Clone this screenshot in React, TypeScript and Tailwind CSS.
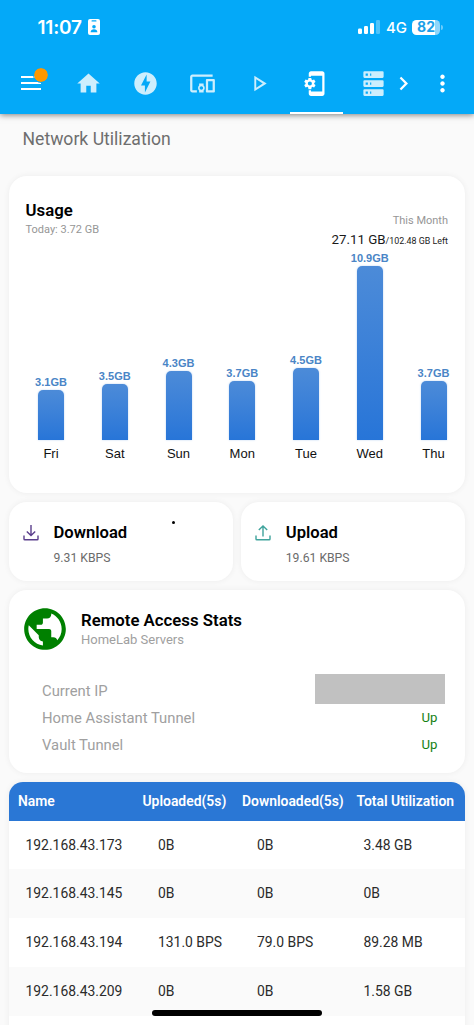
// App.tsx - Network dashboard
import {
  MdChevronRight,
  MdDevicesOther,
  MdHome,
  MdMoreVert,
  MdOfflineBolt,
  MdPhonelinkSetup,
  MdPublic,
} from 'react-icons/md';

const usage = [
  { day: 'Fri', label: '3.1GB', height: 50 },
  { day: 'Sat', label: '3.5GB', height: 56 },
  { day: 'Sun', label: '4.3GB', height: 69 },
  { day: 'Mon', label: '3.7GB', height: 59 },
  { day: 'Tue', label: '4.5GB', height: 72 },
  { day: 'Wed', label: '10.9GB', height: 174 },
  { day: 'Thu', label: '3.7GB', height: 59.5 },
];

const clients = [
  { name: '192.168.43.173', up: '0B', down: '0B', total: '3.48 GB' },
  { name: '192.168.43.145', up: '0B', down: '0B', total: '0B' },
  { name: '192.168.43.194', up: '131.0 BPS', down: '79.0 BPS', total: '89.28 MB' },
  { name: '192.168.43.209', up: '0B', down: '0B', total: '1.58 GB' },
];

function StatusBar() {
  return (
    <div className="flex items-center h-[54px] pl-[37.5px] pr-[31px] font-['Inter'] text-white">
      <span className="text-[19px] leading-none font-semibold tracking-[-0.2px]">11:07</span>
      <svg className="ml-[6px] w-[12px] h-[16px]" viewBox="0 0 12 16">
        <rect width="12" height="16" rx="2" fill="#fff" />
        <rect x="3.5" y="1.3" width="5" height="1.2" rx="0.6" fill="#04a9f8" />
        <circle cx="6" cy="7.8" r="1.8" fill="#04a9f8" />
        <path d="M2.6 13.3c0-2 1.5-3 3.4-3s3.4 1 3.4 3z" fill="#04a9f8" />
      </svg>
      <svg className="ml-auto w-[22px] h-[14px]" viewBox="0 0 22 14" fill="#fff">
        <rect x="0" y="8.5" width="4" height="5.5" rx="1.2" />
        <rect x="6" y="6" width="4" height="8" rx="1.2" />
        <rect x="12" y="3" width="4" height="11" rx="1.2" />
        <rect x="18" y="0" width="4" height="14" rx="1.2" opacity="0.3" />
      </svg>
      <span className="ml-[6px] w-[21px] text-[15px] leading-none font-medium">4G</span>
      <div className="ml-[5px] flex items-center">
        <div className="w-[28px] h-[15px] rounded-[4.5px] bg-linear-to-r from-white from-82% to-[#8fd6fb] to-82% flex items-center justify-center text-[14px] leading-none font-bold text-[#1ba0e8]">
          82
        </div>
        <div className="ml-px w-[2px] h-[5px] rounded-r-full bg-[#6ccbfb]" />
      </div>
    </div>
  );
}

function TopNav() {
  return (
    <nav className="flex items-center h-[60px] pb-[2px] text-[#cdeefd]">
      <div className="relative ml-[21px] w-[20px] h-[14px] text-white">
        <svg className="w-[20px] h-[14px]" viewBox="0 0 20 14" fill="currentColor">
          <path d="M0 0h20v2H0zM0 6h20v2H0zM0 12h20v2H0z" />
        </svg>
        <span className="absolute left-[12.5px] -top-[8px] w-[14px] h-[14px] rounded-full bg-[#ff9800] outline-1 outline-[#04a9f8]" />
      </div>
      <MdHome className="ml-[34px] w-[27px] h-[27px] shrink-0" />
      <MdOfflineBolt className="ml-[30px] w-[27px] h-[27px] shrink-0" />
      <MdDevicesOther className="ml-[30px] w-[27px] h-[27px] shrink-0" />
      <svg className="ml-[31px] w-[27px] h-[27px] shrink-0" viewBox="0 0 24 24" fill="currentColor">
        <path d="M8.2 8.3 14 12l-5.8 3.7V8.3M6.5 5.200v13.600L17.500 12" />
      </svg>
      <div className="relative ml-[16px] w-[53px] h-[27px] flex justify-center pr-[3px] text-white">
        <MdPhonelinkSetup className="w-[27px] h-[27px] shrink-0" />
        <span className="absolute left-0 top-[42px] w-[53px] h-[2.5px] bg-white" />
      </div>
      <svg className="ml-[17px] w-[27px] h-[27px] shrink-0" viewBox="0 0 24 24" fill="currentColor">
        <path d="M4 1h16a1 1 0 0 1 1 1v4a1 1 0 0 1-1 1H4a1 1 0 0 1-1-1V2a1 1 0 0 1 1-1m0 8h16a1 1 0 0 1 1 1v4a1 1 0 0 1-1 1H4a1 1 0 0 1-1-1v-4a1 1 0 0 1 1-1m0 8h16a1 1 0 0 1 1 1v4a1 1 0 0 1-1 1H4a1 1 0 0 1-1-1v-4a1 1 0 0 1 1-1M9 5h1V3H9v2m0 8h1v-2H9v2m0 8h1v-2H9v2M5 3v2h2V3H5m0 8v2h2v-2H5m0 8v2h2v-2H5z" />
      </svg>
      <MdChevronRight className="ml-[2.5px] w-[27px] h-[27px] shrink-0 text-white" />
      <MdMoreVert className="ml-[12.5px] w-[27px] h-[27px] shrink-0 text-white" />
    </nav>
  );
}

function UsageCard() {
  return (
    <section className="h-[317.5px] rounded-[18px] bg-white shadow-[0_0_6px_rgba(0,0,0,0.06)] flex flex-col">
      <div className="h-[76px] flex justify-between pl-[16.5px] pr-[17px] whitespace-nowrap">
        <div className="pt-[24.5px]">
          <h2 className="text-[16.8px] leading-[20px] font-semibold text-black">Usage</h2>
          <p className="text-[11px] leading-[20px] text-[#969696]">Today: 3.72 GB</p>
        </div>
        <div className="pt-[35.5px] text-right">
          <p className="text-[11px] leading-[20px] text-[#969696]">This Month</p>
          <p className="text-[13.3px] leading-[18px] text-[#1a1a1a]">
            27.11 GB<span className="text-[8.9px]">/102.48 GB Left</span>
          </p>
        </div>
      </div>

      {/* Daily bars */}
      <div className="h-[212.5px] flex items-end justify-between pl-[25px] pr-[14.5px] font-['Liberation_Sans']">
        {usage.map((d, i) => (
          <div key={i} className="w-[34px] flex flex-col items-center">
            <span className="text-[11px] leading-[16px] font-bold text-[#4a85c6]">{d.label}</span>
            <div
              className="w-[26px] rounded-t-[5px] bg-linear-to-b from-[#4c8bd8] to-[#2775d8] shadow-[0_0_2px_rgba(39,117,216,0.35)]"
              style={{ height: d.height }}
            />
            <span className="h-[24px] text-[13px] leading-[27px] text-[#111]">{d.day}</span>
          </div>
        ))}
      </div>
    </section>
  );
}

function SpeedCard({ title, value, color, arrow }: { title: string; value: string; color: string; arrow: string }) {
  return (
    <div className="flex-1 h-[78.5px] rounded-[18px] bg-white shadow-[0_0_6px_rgba(0,0,0,0.06)] flex pl-[14px] whitespace-nowrap">
      <svg className="mt-[23px] w-[16px] h-[16px]" viewBox="0 0 16 16" fill="none" stroke={color} strokeWidth="1.4">
        <path d={arrow} />
        <path d="M1 10.5V14a.8.8 0 0 0 .8.8h12.4a.8.8 0 0 0 .8-.8v-3.5" />
      </svg>
      <div className="ml-[14.5px] pt-[21px]">
        <h2 className="text-[16.6px] leading-[20px] font-semibold text-black">{title}</h2>
        <p className="mt-[5px] text-[12.2px] leading-[20px] text-[#6b6b6b]">{value}</p>
      </div>
    </div>
  );
}

function RemoteAccess() {
  return (
    <section className="h-[183px] rounded-[18px] bg-white shadow-[0_0_6px_rgba(0,0,0,0.06)] whitespace-nowrap">
      <div className="flex h-[87px] pl-[11px] pt-[14px]">
        <MdPublic className="w-[50px] h-[50px] text-[#008000]" />
        <div className="ml-[11px] pt-[6.5px]">
          <h2 className="text-[16.8px] leading-[20px] font-semibold text-black">Remote Access Stats</h2>
          <p className="text-[13px] leading-[19px] text-[#a0a0a0]">HomeLab Servers</p>
        </div>
      </div>
      <div className="pl-[33px] text-[14.8px] text-[#a0a0a0]">
        <div className="flex items-center justify-between h-[27.5px] pr-[20.5px]">
          <span className="pt-px">Current IP</span>
          <div className="w-[129.5px] h-[30px] shrink-0 -mt-[2px] bg-[#c1c1c1]" />
        </div>
        <div className="flex items-center justify-between h-[27.5px] pr-[27.5px]">
          <span>Home Assistant Tunnel</span>
          <span className="text-[13.2px] text-[#128012]">Up</span>
        </div>
        <div className="flex items-center justify-between h-[27.5px] pr-[27.5px]">
          <span>Vault Tunnel</span>
          <span className="text-[13.2px] text-[#128012]">Up</span>
        </div>
      </div>
    </section>
  );
}

function ClientTable() {
  return (
    <section className="h-[300px] rounded-t-[14px] overflow-hidden bg-white shadow-[0_0_6px_rgba(0,0,0,0.06)] whitespace-nowrap">
      <div className="grid grid-cols-[124.5px_99.5px_114.5px_1fr] items-center h-[39.3px] pl-[9px] bg-[#2a77d5] text-[13.9px] font-semibold text-white">
        <span>Name</span>
        <span>Uploaded(5s)</span>
        <span>Downloaded(5s)</span>
        <span>Total Utilization</span>
      </div>
      {clients.map((c, i) => (
        <div
          key={i}
          className="grid grid-cols-[132.5px_99px_106.5px_1fr] items-center h-[48.7px] pl-[16.5px] text-[13.9px] text-[#2b2b2b] even:bg-white odd:bg-[#fafafa]"
        >
          <span>{c.name}</span>
          <span>{c.up}</span>
          <span>{c.down}</span>
          <span>{c.total}</span>
        </div>
      ))}
    </section>
  );
}

export default function App() {
  return (
    <div className="relative w-[474px] h-[1025px] overflow-hidden bg-[#fafafa] font-['Roboto',sans-serif]">
      <header className="h-[114px] bg-[#04a9f8] shadow-[0_1px_6px_rgba(0,0,0,0.5)]">
        <StatusBar />
        <TopNav />
      </header>

      <main className="px-[9px]">
        <h1 className="h-[61.5px] pt-[12px] pl-[13.5px] text-[17.6px] leading-[26px] text-[#6e6e6e]">Network Utilization</h1>
        <div className="flex flex-col gap-[9px]">
          <UsageCard />
          <div className="flex gap-[8.5px]">
            <SpeedCard title="Download" value="9.31 KBPS" color="#5b3f8c" arrow="M8 0v10.5M3.8 6.5 8 10.6l4.2-4.1" />
            <SpeedCard title="Upload" value="19.61 KBPS" color="#3fa39c" arrow="M8 11.5V1M3.8 5.1 8 1l4.2 4.1" />
          </div>
          <RemoteAccess />
          <ClientTable />
        </div>
      </main>

      {/* Pointer dot and home indicator float above the page */}
      <span className="absolute left-[171.5px] top-[521px] w-[3px] h-[3px] rounded-full bg-black" />
      <span className="absolute left-[152px] top-[1010px] w-[170px] h-[6px] rounded-full bg-black" />
    </div>
  );
}
